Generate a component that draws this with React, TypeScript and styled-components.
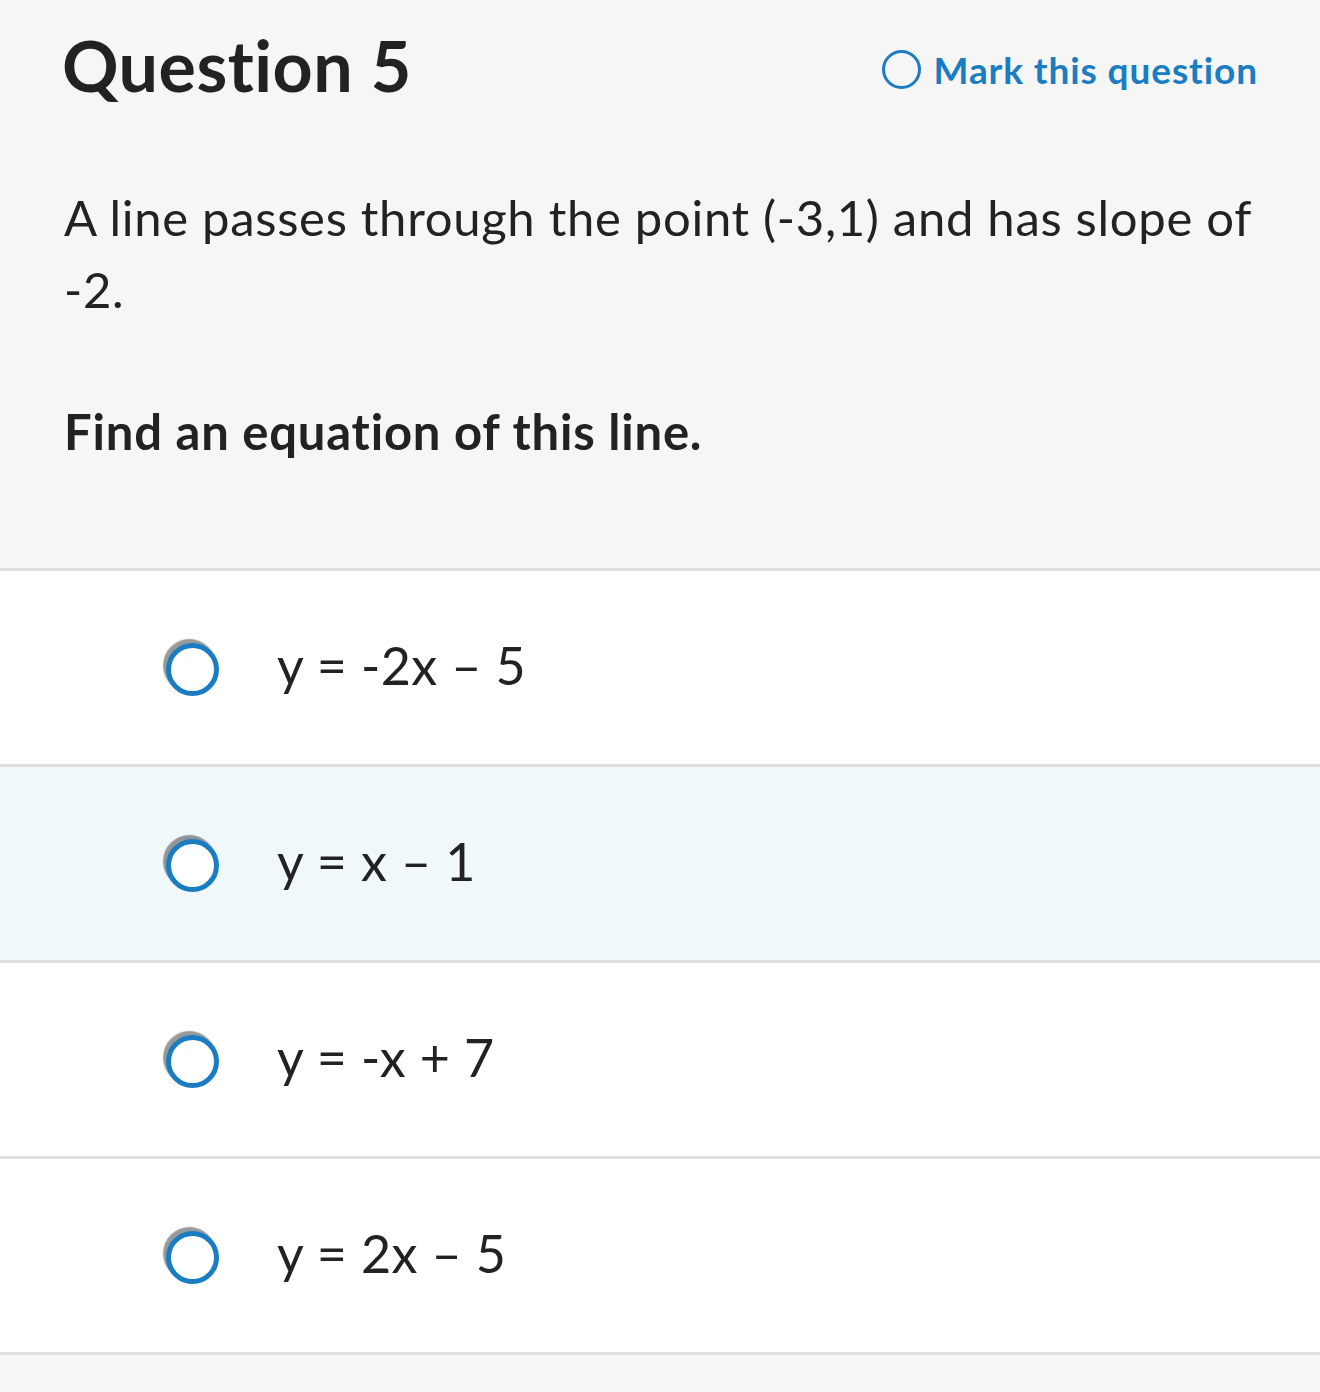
import styled, { createGlobalStyle } from 'styled-components';

const GlobalStyle = createGlobalStyle`
  html, body {
    margin: 0;
    padding: 0;
    background: #f6f6f6;
    font-family: Lato, 'Liberation Sans', sans-serif;
    color: #222222;
  }
`;

const Page = styled.div`
  width: 1320px;
  min-height: 1392px;
  background: #f6f6f6;
`;

const Header = styled.section`
  padding: 25px 62px 101px 62px;
  border-bottom: 3px solid #dfdfe3;
`;

const TitleRow = styled.div`
  display: flex;
  align-items: center;
  justify-content: space-between;
`;

const Title = styled.h1`
  margin: 0;
  font-size: 70px;
  font-weight: 700;
  line-height: 80px;
  letter-spacing: 0.5px;
`;

const MarkButton = styled.button`
  display: flex;
  align-items: center;
  gap: 13px;
  border: none;
  background: none;
  padding: 0;
  margin-top: 8px;
  color: #1a7dc2;
  font-family: inherit;
  font-size: 37px;
  font-weight: 700;
  letter-spacing: 0.9px;
  cursor: pointer;
`;

const MarkRing = styled.span`
  width: 33px;
  height: 33px;
  border: 3px solid #1a7dc2;
  border-radius: 50%;
`;

const Stem = styled.p<{ strong?: boolean }>`
  margin: ${({ strong }) => (strong ? '70px 0 0' : '76px 0 0')};
  padding-left: 2px;
  font-size: 49px;
  line-height: 72px;
  letter-spacing: ${({ strong }) => (strong ? '0.8px' : '0.7px')};
  font-weight: ${({ strong }) => (strong ? 700 : 400)};
`;

const Options = styled.ul`
  list-style: none;
  margin: 0;
  padding: 0;
`;

const Option = styled.li<{ active?: boolean }>`
  display: flex;
  align-items: center;
  gap: 58px;
  height: 193px;
  padding-left: 166px;
  background: ${({ active }) => (active ? '#f1f8fc' : '#ffffff')};
  border-bottom: 3px solid #dfdfe3;
`;

const Radio = styled.span`
  width: 43px;
  height: 43px;
  border: 5px solid #1a7dc2;
  border-radius: 50%;
  background: #ffffff;
  box-shadow: -3px -4px 1px rgba(0, 0, 0, 0.4);
  margin-top: 4px;
`;

const Answer = styled.span`
  font-size: 52px;
  line-height: 60px;
  letter-spacing: 0.4px;
  margin-bottom: 6px;
`;

const answers = ['y = -2x – 5', 'y = x – 1', 'y = -x + 7', 'y = 2x – 5'];

export default function App() {
  return (
    <Page>
      <GlobalStyle />
      <Header>
        <TitleRow>
          <Title>Question 5</Title>
          <MarkButton>
            <MarkRing />
            Mark this question
          </MarkButton>
        </TitleRow>
        <Stem>A line passes through the point (-3,1) and has slope of -2.</Stem>
        <Stem strong>Find an equation of this line.</Stem>
      </Header>
      <Options>
        {answers.map((a, i) => (
          <Option key={a} active={i === 1}>
            <Radio />
            <Answer>{a}</Answer>
          </Option>
        ))}
      </Options>
    </Page>
  );
}
